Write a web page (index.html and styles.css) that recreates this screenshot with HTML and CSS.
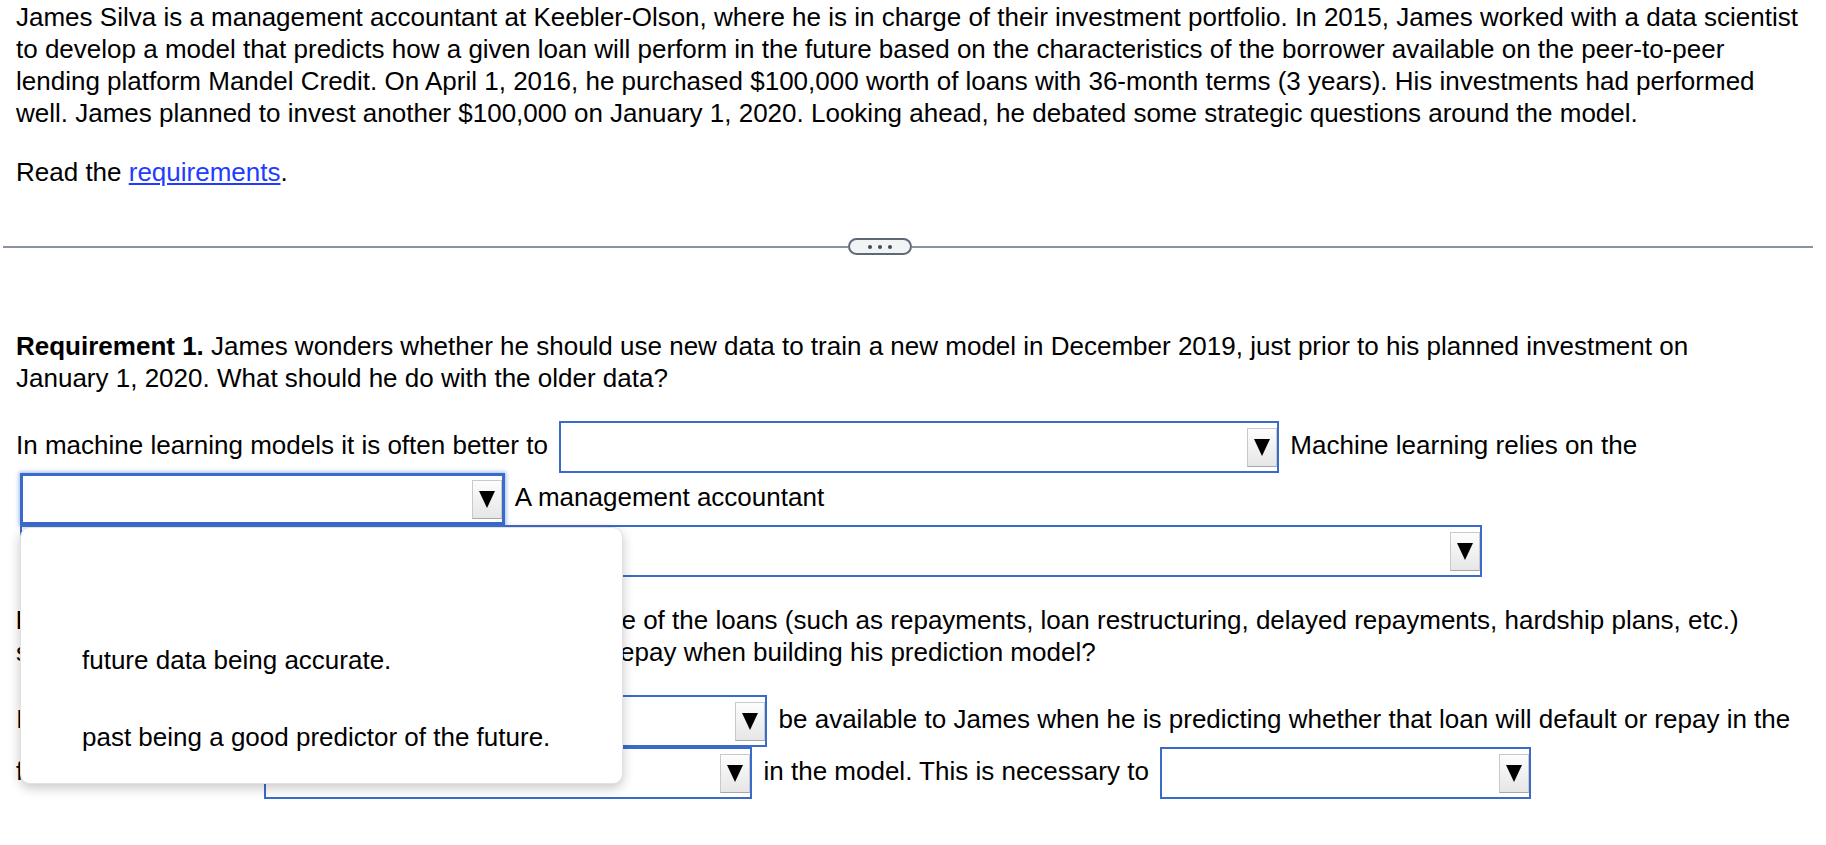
FILE: index.html
```html
<!DOCTYPE html>
<html lang="en">
<head>
  <meta charset="UTF-8">
  <title>Requirement 1</title>
  <link rel="stylesheet" href="styles.css">
</head>
<body>
  <div class="page">
    <p>James Silva is a management accountant at Keebler-Olson, where he is in charge of their investment portfolio. In 2015, James worked with a data scientist to develop a model that predicts how a given loan will perform in the future based on the characteristics of the borrower available on the peer-to-peer lending platform Mandel Credit. On April 1, 2016, he purchased $100,000 worth of loans with 36-month terms (3 years). His investments had performed well. James planned to invest another $100,000 on January 1, 2020. Looking ahead, he debated some strategic questions around the model.</p>

    <p>Read the <a class="link" href="#">requirements</a>.</p>

    <div class="divider">
      <span class="divider-line divider-line-left"></span>
      <span class="divider-pill"><i></i><i></i><i></i></span>
      <span class="divider-line"></span>
    </div>

    <p><b>Requirement 1.</b> James wonders whether he should use new data to train a new model in December 2019, just prior to his planned investment on January&nbsp;1,&nbsp;2020. What should he do with the older data?</p>

    <p class="answer">In machine learning models it is often better to
      <span class="dd dd-a"><span class="dd-arrow"></span></span>
      Machine learning relies on the
      <span class="dd dd-b dd-open"><span class="dd-arrow"></span>
        <span class="dd-menu">
          <span class="dd-option"></span>
          <span class="dd-option">future data being accurate.</span>
          <span class="dd-option">past being a good predictor of the future.</span>
        </span>
      </span>
      A management accountant
      <span class="dd dd-c"><span class="dd-arrow"></span></span>
    </p>

    <p><b>Requirement 2.</b> Should James use their performance of the loans (such as repayments, loan restructuring, delayed repayments, hardship plans, etc.) subsequent to their issue to judge if it will default or repay when building his prediction model?</p>

    <p class="answer">Information about loan performance after issue
      <span class="dd dd-d"><span class="dd-arrow"></span></span>
      be available to James when he is predicting whether that loan will default or repay in the future. So we should
      <span class="dd dd-e"><span class="dd-arrow"></span></span>
      in the model. This is necessary to
      <span class="dd dd-f"><span class="dd-arrow"></span></span>
    </p>
  </div>
</body>
</html>
```

FILE: styles.css
```css
body {
  margin: 0;
  background: #fff;
  color: #000;
  font-family: "Liberation Sans", Arial, Helvetica, sans-serif;
  font-size: 26px;
  line-height: 32px;
}
.page {
  padding: 1px 20px 0 16px;
}
p {
  margin: 0 0 27px;
}
.link {
  color: #1f3cff;
  text-decoration: underline;
}

/* divider with the "..." pill */
.divider {
  display: flex;
  align-items: center;
  height: 17px;
  margin: 50px -7px 75px -13px;
}
.divider-line {
  flex: 1;
  height: 2px;
  background: #8b93a0;
}
.divider-line-left {
  flex: 0 0 845px;
}
.divider-pill {
  display: flex;
  align-items: center;
  justify-content: center;
  gap: 6px;
  box-sizing: border-box;
  width: 64px;
  height: 17px;
  border: 2px solid #5f6876;
  border-radius: 9px;
  background: #f2f3f5;
}
.divider-pill i {
  width: 4px;
  height: 4px;
  border-radius: 50%;
  background: #434a55;
}

/* dropdowns */
.dd {
  display: inline-flex;
  align-items: center;
  justify-content: flex-end;
  box-sizing: border-box;
  height: 52px;
  margin: 0 4px;
  vertical-align: middle;
  border: 2px solid #3a6bca;
  background: #fff;
}
.dd-a { width: 720px; }
.dd-b { width: 485px; }
.dd-c { width: 1462px; }
.dd-d { width: 201px; }
.dd-e { width: 488px; }
.dd-f { width: 371px; }
.dd-arrow {
  display: flex;
  justify-content: center;
  box-sizing: border-box;
  width: 30px;
  height: 39px;
  padding-top: 10px;
  border: 1px solid #c9c9c9;
  border-bottom-color: #a8a8a8;
  background: linear-gradient(#fdfdfd, #e6e6e6);
}
.dd-arrow::after {
  content: "";
  width: 0;
  height: 0;
  border-left: 8px solid transparent;
  border-right: 8px solid transparent;
  border-top: 17px solid #000;
}
.dd-open {
  position: relative;
  border: 3px solid #3a6bca;
  box-shadow: 0 0 4px 1px rgba(74, 125, 214, 0.55);
}
.dd-menu {
  position: absolute;
  top: calc(100% + 5px);
  left: -3px;
  z-index: 10;
  display: flex;
  flex-direction: column;
  box-sizing: border-box;
  width: 603px;
  height: 257px;
  padding: 16px 0 8px;
  border: 1px solid #e2e2e2;
  border-radius: 10px;
  background: #fff;
  box-shadow: 0 4px 12px rgba(0, 0, 0, 0.22);
}
.dd-option {
  display: flex;
  align-items: center;
  height: 77px;
  padding-left: 61px;
  white-space: nowrap;
}
```
